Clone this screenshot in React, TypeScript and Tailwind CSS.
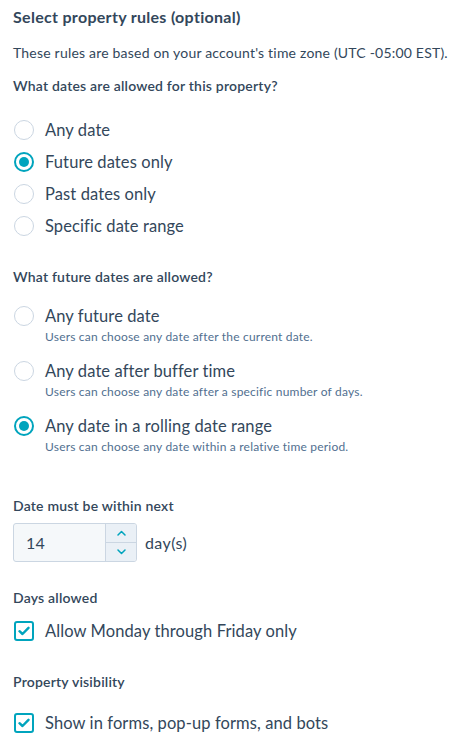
import type { ReactNode } from "react";

const font = { fontFamily: "Lato, 'Liberation Sans', sans-serif" };

function Radio({ checked }: { checked?: boolean }) {
  return checked ? (
    <span className="flex h-5 w-5 shrink-0 items-center justify-center rounded-full border-2 border-[#00a4bd] bg-white">
      <span className="h-2.5 w-2.5 rounded-full bg-[#00a4bd]" />
    </span>
  ) : (
    <span className="h-5 w-5 shrink-0 rounded-full border-[1.5px] border-[#cbd6e2] bg-white" />
  );
}

function Check() {
  return (
    <span className="flex h-5 w-5 shrink-0 items-center justify-center rounded-[3px] border-2 border-[#00a4bd] bg-white">
      <svg width="12" height="10" viewBox="0 0 12 10" fill="none">
        <path d="M1.5 5.2 4.5 8 10.5 1.8" stroke="#00a4bd" strokeWidth="2.4" strokeLinecap="round" strokeLinejoin="round" />
      </svg>
    </span>
  );
}

function RadioRow({ label, checked }: { label: string; checked?: boolean }) {
  return (
    <div className="flex h-8 items-center gap-[11px] pl-px">
      <Radio checked={checked} />
      <span className="text-[16.5px] tracking-[0.1px] text-[#33475b]">{label}</span>
    </div>
  );
}

function RadioOption({ label, hint, checked }: { label: string; hint: string; checked?: boolean }) {
  return (
    <div className="h-[55px] pl-px">
      <div className="flex h-[22px] items-center gap-[11px]">
        <Radio checked={checked} />
        <span className="text-[16.5px] tracking-[0.1px] text-[#33475b]">{label}</span>
      </div>
      <div className="pl-[31px] text-[12px] leading-[20px] tracking-[0.2px] text-[#516f90]">{hint}</div>
    </div>
  );
}

function CheckRow({ children }: { children: ReactNode }) {
  return (
    <div className="flex h-8 items-center gap-[11px] pl-px">
      <Check />
      <span className="text-[16.5px] tracking-[0.1px] text-[#33475b]">{children}</span>
    </div>
  );
}

function Label({ children, className = "" }: { children: ReactNode; className?: string }) {
  return (
    <div className={`h-5 text-[14px] font-semibold leading-5 tracking-[0.2px] text-[#33475b] ${className}`}>
      {children}
    </div>
  );
}

export default function App() {
  return (
    <div className="min-h-[746px] bg-white pl-[13px] pr-2" style={font}>
      <h2 className="text-[16px] font-bold leading-[34px] tracking-[0.3px] text-[#33475b]">
        Select property rules (optional)
      </h2>
      <p className="mt-[9px] whitespace-nowrap text-[14px] leading-5 tracking-[0.2px] text-[#33475b]">
        These rules are based on your account's time zone (UTC -05:00 EST).
      </p>
      <Label className="mt-[13px]">What dates are allowed for this property?</Label>

      <div className="mt-[18px]">
        <RadioRow label="Any date" />
        <RadioRow label="Future dates only" checked />
        <RadioRow label="Past dates only" />
        <RadioRow label="Specific date range" />
      </div>

      <Label className="mt-[25px]">What future dates are allowed?</Label>
      <div className="mt-[18px]">
        <RadioOption label="Any future date" hint="Users can choose any date after the current date." />
        <RadioOption label="Any date after buffer time" hint="Users can choose any date after a specific number of days." />
        <RadioOption
          label="Any date in a rolling date range"
          hint="Users can choose any date within a relative time period."
          checked
        />
      </div>

      <Label className="mt-[26px]">Date must be within next</Label>
      <div className="mt-[7px] flex items-center gap-2">
        <div className="flex h-[39px] w-[124px] overflow-hidden rounded-[3px] border border-[#cbd6e2] bg-[#f5f8fa]">
          <div className="flex flex-1 items-center pl-3 text-[16px] tracking-[0.3px] text-[#33475b]">14</div>
          <div className="flex w-[31px] flex-col border-l border-[#cbd6e2] bg-[#eaf0f6]">
            <button className="flex flex-1 items-center justify-center border-b border-[#cbd6e2]">
              <svg width="9" height="6" viewBox="0 0 9 6" fill="none">
                <path d="M1 5 4.5 1.5 8 5" stroke="#00a4bd" strokeWidth="1.5" strokeLinecap="round" strokeLinejoin="round" />
              </svg>
            </button>
            <button className="flex flex-1 items-center justify-center">
              <svg width="9" height="6" viewBox="0 0 9 6" fill="none">
                <path d="M1 1 4.5 4.5 8 1" stroke="#00a4bd" strokeWidth="1.5" strokeLinecap="round" strokeLinejoin="round" />
              </svg>
            </button>
          </div>
        </div>
        <span className="text-[16px] tracking-[0.4px] text-[#33475b]">day(s)</span>
      </div>

      <Label className="mt-[26px]">Days allowed</Label>
      <div className="mt-[7px]">
        <CheckRow>Allow Monday through Friday only</CheckRow>
      </div>

      <Label className="mt-[25px]">Property visibility</Label>
      <div className="mt-[15px]">
        <CheckRow>Show in forms, pop-up forms, and bots</CheckRow>
      </div>
    </div>
  );
}
